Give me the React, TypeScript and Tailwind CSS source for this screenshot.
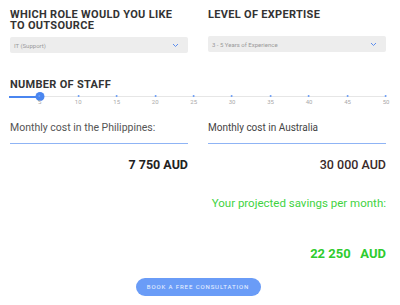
import React from 'react'

const ticks = [5, 10, 15, 20, 25, 30, 35, 40, 45, 50]

function Chevron() {
  return (
    <svg width="7" height="5" viewBox="0 0 7 5" fill="none">
      <path d="M1 1l2.5 2.5L6 1" stroke="#5b8def" strokeWidth="1" />
    </svg>
  )
}

function Select({ label }: { label: string }) {
  return (
    <div className="h-[16px] bg-[#ededed] rounded-[2px] flex items-center justify-between pl-[4px] pr-[9px]">
      <span className="text-[6px] text-[#9a9a9a]">{label}</span>
      <Chevron />
    </div>
  )
}

export default function App() {
  const value = 5
  const pct = ((value - 1) / 49) * 100

  return (
    <div className="w-[400px] h-[305px] bg-white font-['Roboto',sans-serif] pl-[10px] pr-[14px] pt-[8px] overflow-hidden">
      {/* Role + expertise */}
      <div className="grid grid-cols-2 gap-x-[20px]">
        <div>
          <h2 className="text-[11px] leading-[11px] font-bold tracking-[0.3px] text-[#333] h-[22px] pt-[1px]">
            WHICH ROLE WOULD YOU LIKE TO OUTSOURCE
          </h2>
          <div className="mt-[7px]">
            <Select label="IT (Support)" />
          </div>
        </div>
        <div>
          <h2 className="text-[11px] leading-[11px] font-bold tracking-[0.3px] text-[#333] h-[22px] pt-[1px]">
            LEVEL OF EXPERTISE
          </h2>
          <div className="mt-[6px]">
            <Select label="3 - 5 Years of Experience" />
          </div>
        </div>
      </div>

      {/* Number of staff */}
      <h2 className="mt-[26px] text-[11px] leading-[11px] font-bold tracking-[0.3px] text-[#333]">
        NUMBER OF STAFF
      </h2>
      <div className="relative mt-[4px] h-[14px] ml-[-1px]">
        <div className="absolute left-0 right-0 top-[2px] h-[1px] bg-[#e6e6e6]" />
        <div className="absolute left-0 top-[1.5px] h-[2px] bg-[#4a86f0]" style={{ width: `${pct}%` }} />
        <div
          className="absolute top-[-2px] w-[9px] h-[9px] rounded-full bg-[#4a86f0] -translate-x-1/2"
          style={{ left: `${pct}%` }}
        />
        {ticks.map((t) => {
          const p = ((t - 1) / 49) * 100
          return (
            <div key={t} className="absolute top-[1px] -translate-x-1/2 flex flex-col items-center" style={{ left: `${p}%` }}>
              <div className="w-[2px] h-[2px] rounded-full bg-[#6a9cf5]" />
              <span className="mt-[2px] text-[6px] leading-[6px] text-[#aaa]">{t}</span>
            </div>
          )
        })}
      </div>

      {/* Costs */}
      <div className="grid grid-cols-2 gap-x-[20px] mt-[13px]">
        <div>
          <p className="text-[10.5px] text-[#555] leading-[14px]">Monthly cost in the Philippines:</p>
          <div className="mt-[8px] h-[1px] bg-[#8fb4f5]" />
          <p className="mt-[12px] text-right text-[12.5px] font-bold text-[#222]">7 750 AUD</p>
        </div>
        <div>
          <p className="text-[10px] text-[#444] leading-[14px]">Monthly cost in Australia</p>
          <div className="mt-[8px] h-[1px] bg-[#8fb4f5]" />
          <p className="mt-[12px] text-right text-[12.5px] font-medium text-[#3a2a2a]">30 000 AUD</p>
        </div>
      </div>

      {/* Savings */}
      <div className="flex flex-col items-end mt-[21px]">
        <p className="text-[11.5px] text-[#3fd33f] leading-[14px]">Your projected savings per month:</p>
        <p className="mt-[36px] text-[13px] font-bold text-[#2ecc2e] leading-[16px] whitespace-pre">22 250   AUD</p>
      </div>

      {/* CTA */}
      <div className="flex justify-center mt-[16px]">
        <button className="w-[125px] h-[18px] rounded-full bg-[#6a9cf7] text-[6px] tracking-[0.9px] text-white/90">
          BOOK A FREE CONSULTATION
        </button>
      </div>
    </div>
  )
}
